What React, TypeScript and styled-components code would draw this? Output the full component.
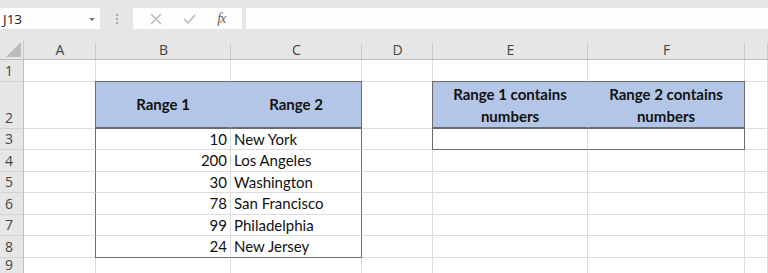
import React from 'react';
import styled, { createGlobalStyle } from 'styled-components';

const GlobalStyle = createGlobalStyle`
	html, body {
		margin: 0;
		padding: 0;
		background: #ffffff;
	}
	body {
		font-family: Lato, "Open Sans", sans-serif;
		overflow: hidden;
	}
`;

const gridLine = '#dcdcdc';
const tableLine = '#6b6b6b';
const headerBlue = '#b4c6e7';

const columnWidths = [ 24, 72, 135, 131, 71, 155, 157, 23 ];
const columnLetters = [ 'A', 'B', 'C', 'D', 'E', 'F', '' ];
const rowHeights = [ 20, 22, 47, 21, 22, 21, 22, 21, 22, 22 ];

const Sheet = styled.div`
	width: 768px;
	height: 273px;
	overflow: hidden;
	display: flex;
	flex-direction: column;
`;

const FormulaBar = styled.div`
	height: 40px;
	flex-shrink: 0;
	box-sizing: border-box;
	padding: 8px 0 11px 0;
	background: #e6e6e6;
	display: flex;
	align-items: stretch;
`;

const NameBox = styled.div`
	width: 100px;
	background: #fdfdfd;
	display: flex;
	align-items: center;
	justify-content: space-between;
	padding: 0 5px 0 3px;
	box-sizing: border-box;
	font-family: "Open Sans", sans-serif;
	font-size: 13.5px;
	color: #222;
`;

const Caret = styled.span`
	width: 0;
	height: 0;
	border-left: 3px solid transparent;
	border-right: 3px solid transparent;
	border-top: 3px solid #777;
	margin-top: 1px;
`;

const Dots = styled.div`
	width: 33px;
	display: flex;
	flex-direction: column;
	align-items: center;
	justify-content: center;
	gap: 2px;
	span {
		width: 2px;
		height: 2px;
		background: #a8a8a8;
	}
`;

const FxBox = styled.div`
	width: 109px;
	background: #fdfdfd;
	display: flex;
	align-items: center;
	justify-content: space-around;
	padding: 0 6px 0 6px;
	box-sizing: border-box;
`;

const Fx = styled.span`
	font-family: "Liberation Serif", serif;
	font-style: italic;
	font-size: 14px;
	color: #666;
	letter-spacing: -1px;
`;

const FormulaInput = styled.div`
	flex: 1;
	margin-left: 4px;
	background: #fdfdfd;
`;

const Grid = styled.div`
	display: grid;
	flex-shrink: 0;
	grid-template-columns: ${columnWidths.map((w) => `${w}px`).join(' ')};
	grid-template-rows: ${rowHeights.map((h) => `${h}px`).join(' ')};
`;

const Corner = styled.div`
	background: #e6e6e6;
	border-right: 1px solid #c8c8c8;
	border-bottom: 1px solid #bdbdbd;
	box-sizing: border-box;
	position: relative;
	&::after {
		content: '';
		position: absolute;
		right: 2px;
		bottom: 2px;
		width: 0;
		height: 0;
		border-left: 15px solid transparent;
		border-bottom: 15px solid #bcbcbc;
	}
`;

const ColumnHeader = styled.div`
	background: #e6e6e6;
	border-bottom: 1px solid #bdbdbd;
	box-sizing: border-box;
	display: flex;
	align-items: center;
	justify-content: center;
	font-family: "Open Sans", sans-serif;
	font-size: 14px;
	color: #444;
	position: relative;
	&::after {
		content: '';
		position: absolute;
		right: 0;
		top: 4px;
		bottom: 0;
		width: 1px;
		background: #c9c9c9;
	}
`;

const RowHeader = styled.div<{ $top?: boolean }>`
	background: #e6e6e6;
	border-right: 1px solid #bdbdbd;
	border-bottom: 1px solid #d2d2d2;
	box-sizing: border-box;
	display: flex;
	align-items: ${({ $top }) => ($top ? 'flex-start' : 'flex-end')};
	padding: ${({ $top }) => ($top ? '0 0 0 5px' : '0 0 1px 5px')};
	font-family: "Open Sans", sans-serif;
	font-size: 14px;
	line-height: ${({ $top }) => ($top ? '14px' : '18px')};
	color: #444;
`;

interface Edges {
	$top?: number;
	$right?: number;
	$bottom?: number;
	$left?: number;
}

const Cell = styled.div<Edges & { $fill?: boolean; $align?: 'left' | 'right' | 'center'; $bold?: boolean }>`
	box-sizing: border-box;
	background: ${({ $fill }) => ($fill ? headerBlue : '#ffffff')};
	border-right: ${({ $right, $fill }) => ($right ? `${$right}px solid ${tableLine}` : `1px solid ${$fill ? headerBlue : gridLine}`)};
	border-bottom: ${({ $bottom }) => ($bottom ? `${$bottom}px solid ${tableLine}` : `1px solid ${gridLine}`)};
	border-top: ${({ $top }) => ($top ? `${$top}px solid ${tableLine}` : 'none')};
	border-left: ${({ $left }) => ($left ? `${$left}px solid ${tableLine}` : 'none')};
	margin-top: ${({ $top }) => ($top ? '-1px' : '0')};
	margin-left: ${({ $left }) => ($left ? '-1px' : '0')};
	display: flex;
	align-items: center;
	justify-content: ${({ $align }) => ($align === 'right' ? 'flex-end' : $align === 'center' ? 'center' : 'flex-start')};
	text-align: ${({ $align }) => $align || 'left'};
	padding: 0 3px;
	font-family: Lato, "Open Sans", sans-serif;
	font-size: 15px;
	font-weight: ${({ $bold }) => ($bold ? 700 : 400)};
	line-height: 21px;
	color: #111;
	white-space: nowrap;
`;

const Wrapped = styled.span`
	white-space: normal;
	line-height: 22px;
`;

const CrossIcon = () => (
	<svg width="12" height="12" viewBox="0 0 12 12">
		<path d="M1 1 L11 11 M11 1 L1 11" stroke="#b5b5b5" strokeWidth="1.3" fill="none" />
	</svg>
);

const CheckIcon = () => (
	<svg width="13" height="10" viewBox="0 0 13 10">
		<path d="M1 5 L5 9 L12 1" stroke="#b5b5b5" strokeWidth="1.4" fill="none" />
	</svg>
);

const data: [ number, string ][] = [
	[ 10, 'New York' ],
	[ 200, 'Los Angeles' ],
	[ 30, 'Washington' ],
	[ 78, 'San Francisco' ],
	[ 99, 'Philadelphia' ],
	[ 24, 'New Jersey' ],
];

export default function App() {
	const plainRow = (row: number) => columnLetters.map((letter) => (
		<Cell key={`${row}-${letter || 'G'}`} />
	));

	return (
		<Sheet>
			<GlobalStyle />
			<FormulaBar>
				<NameBox>
					J13
					<Caret />
				</NameBox>
				<Dots>
					<span />
					<span />
					<span />
				</Dots>
				<FxBox>
					<CrossIcon />
					<CheckIcon />
					<Fx>fx</Fx>
				</FxBox>
				<FormulaInput />
			</FormulaBar>
			<Grid>
				<Corner />
				{columnLetters.map((letter, i) => (
					<ColumnHeader key={`h${i}`}>{letter}</ColumnHeader>
				))}

				<RowHeader>1</RowHeader>
				{plainRow(1)}

				<RowHeader>2</RowHeader>
				<Cell />
				<Cell $fill $bold $align="center" $top={1} $left={1} $bottom={2}>Range 1</Cell>
				<Cell $fill $bold $align="center" $top={1} $right={1} $bottom={2}>Range 2</Cell>
				<Cell />
				<Cell $fill $bold $align="center" $top={1} $left={1} $bottom={2}>
					<Wrapped>Range 1 contains numbers</Wrapped>
				</Cell>
				<Cell $fill $bold $align="center" $top={1} $right={1} $bottom={2}>
					<Wrapped>Range 2 contains numbers</Wrapped>
				</Cell>
				<Cell />

				{data.map(([ value, city ], i) => {
					const last = i === data.length - 1;
					return (
						<React.Fragment key={city}>
							<RowHeader>{i + 3}</RowHeader>
							<Cell />
							<Cell $align="right" $left={1} $bottom={last ? 1 : 0}>{value}</Cell>
							<Cell $right={1} $bottom={last ? 1 : 0}>{city}</Cell>
							<Cell />
							<Cell $left={i === 0 ? 1 : 0} $bottom={i === 0 ? 1 : 0} />
							<Cell $right={i === 0 ? 1 : 0} $bottom={i === 0 ? 1 : 0} />
							<Cell />
						</React.Fragment>
					);
				})}

				<RowHeader $top>9</RowHeader>
				{plainRow(9)}
			</Grid>
		</Sheet>
	);
}
